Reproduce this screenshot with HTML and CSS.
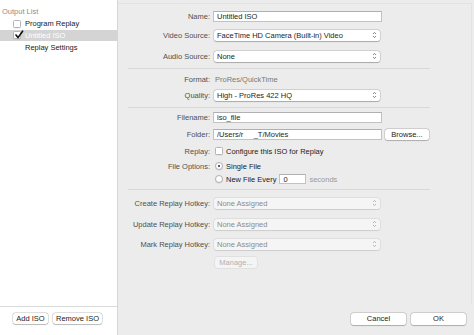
FILE: index.html
```html
<!DOCTYPE html>
<html lang="en">
<head>
    <meta charset="UTF-8">
    <title>ISO Settings</title>
    <link rel="stylesheet" href="styles.css">
</head>
<body>
    <div class="window">
        <aside class="sidebar">
            <div class="outline">
                <div class="outline-title">Output List</div>
                <div class="outline-item"><span class="check"></span>Program Replay</div>
                <div class="outline-item selected">
                    <span class="check">
                        <svg class="tick" viewBox="0 0 10 10"><path d="M2 5 L4 7.6 L8.6 1.2"/></svg>
                    </span>Untitled ISO
                </div>
                <div class="outline-item">Replay Settings</div>
            </div>
            <div class="sidebar-footer">
                <button class="btn">Add ISO</button>
                <button class="btn">Remove ISO</button>
            </div>
        </aside>

        <main class="content">
            <div class="panel">
                <div class="form">
                    <div class="row">
                        <span class="label">Name:</span>
                        <input class="text-field" type="text" value="Untitled ISO">
                    </div>
                    <div class="row mt7">
                        <span class="label">Video Source:</span>
                        <div class="popup">
                            <span>FaceTime HD Camera (Built-in) Video</span>
                            <svg class="arrows" viewBox="0 0 5 8"><path d="M1 3 L2.5 1.4 L4 3 M1 5 L2.5 6.6 L4 5"/></svg>
                        </div>
                    </div>
                    <div class="row mt9">
                        <span class="label">Audio Source:</span>
                        <div class="popup">
                            <span>None</span>
                            <svg class="arrows" viewBox="0 0 5 8"><path d="M1 3 L2.5 1.4 L4 3 M1 5 L2.5 6.6 L4 5"/></svg>
                        </div>
                    </div>

                    <div class="sep mt6"></div>

                    <div class="row mt4">
                        <span class="label">Format:</span>
                        <span class="value">ProRes/QuickTime</span>
                    </div>
                    <div class="row mt4">
                        <span class="label">Quality:</span>
                        <div class="popup">
                            <span>High - ProRes 422 HQ</span>
                            <svg class="arrows" viewBox="0 0 5 8"><path d="M1 3 L2.5 1.4 L4 3 M1 5 L2.5 6.6 L4 5"/></svg>
                        </div>
                    </div>

                    <div class="sep mt6"></div>

                    <div class="row mt3">
                        <span class="label">Filename:</span>
                        <input class="text-field" type="text" value="iso_file">
                    </div>
                    <div class="row mt5">
                        <span class="label">Folder:</span>
                        <input class="text-field" type="text" value="/Users/r     _T/Movies">
                        <button class="btn browse">Browse...</button>
                    </div>
                    <div class="row mt5">
                        <span class="label">Replay:</span>
                        <label class="option"><span class="check"></span>Configure this ISO for Replay</label>
                    </div>
                    <div class="row mt3">
                        <span class="label">File Options:</span>
                        <label class="option"><span class="radio on"></span>Single File</label>
                    </div>
                    <div class="row mt1">
                        <span class="label"></span>
                        <label class="option"><span class="radio"></span>New File Every</label>
                        <input class="text-field small" type="text" value="0">
                        <span class="unit">seconds</span>
                    </div>

                    <div class="sep mt4"></div>

                    <div class="row mt7">
                        <span class="label">Create Replay Hotkey:</span>
                        <div class="popup disabled">
                            <span>None Assigned</span>
                            <svg class="arrows" viewBox="0 0 5 8"><path d="M1 3 L2.5 1.4 L4 3 M1 5 L2.5 6.6 L4 5"/></svg>
                        </div>
                    </div>
                    <div class="row mt9">
                        <span class="label">Update Replay Hotkey:</span>
                        <div class="popup disabled">
                            <span>None Assigned</span>
                            <svg class="arrows" viewBox="0 0 5 8"><path d="M1 3 L2.5 1.4 L4 3 M1 5 L2.5 6.6 L4 5"/></svg>
                        </div>
                    </div>
                    <div class="row mt8">
                        <span class="label">Mark Replay Hotkey:</span>
                        <div class="popup disabled">
                            <span>None Assigned</span>
                            <svg class="arrows" viewBox="0 0 5 8"><path d="M1 3 L2.5 1.4 L4 3 M1 5 L2.5 6.6 L4 5"/></svg>
                        </div>
                    </div>
                    <div class="row mt6">
                        <span class="label"></span>
                        <button class="btn manage" disabled>Manage...</button>
                    </div>
                </div>
            </div>
            <div class="content-footer">
                <button class="btn wide">Cancel</button>
                <button class="btn wide">OK</button>
            </div>
        </main>
    </div>
</body>
</html>
```

FILE: styles.css
```css
* { margin: 0; padding: 0; box-sizing: border-box; }
body {
    font-family: 'Liberation Sans', Arial, sans-serif;
    font-size: 7.5px;
    color: #222;
    background: #ececec;
    width: 474px;
    height: 335px;
    overflow: hidden;
}
.window { display: flex; height: 335px; }

/* sidebar */
.sidebar {
    width: 118px;
    background: #fff;
    border-right: 1px solid #d6d6d6;
    display: flex;
    flex-direction: column;
}
.outline { flex: 1; padding-top: 6px; }
.outline-title { height: 12px; line-height: 12px; padding-left: 2px; color: #8e8e8e; }
.outline-item {
    height: 11px;
    display: flex;
    align-items: center;
    padding-left: 25px;
    color: #222;
    position: relative;
}
.outline-item .check { position: absolute; left: 13px; top: 1.5px; }
.outline-item + .outline-item { margin-top: 0.5px; }
.outline-item:last-child { margin-top: 1.5px; }
.outline-item.selected { background: #d4d4d4; color: #fff; }
.sidebar-footer {
    height: 29px;
    border-top: 1px solid #d9d9d9;
    padding: 6px 0 0 13px;
    display: flex;
    gap: 5px;
}
.sidebar-footer .btn:first-child { width: 35px; }
.sidebar-footer .btn:last-child { width: 49px; }

/* controls */
.btn {
    font: inherit;
    color: #222;
    height: 11px;
    line-height: 11px;
    background: #fff;
    border: none;
    border-radius: 2.5px;
    box-shadow: 0 0 0 0.5px rgba(0, 0, 0, 0.22), 0 0.5px 1px rgba(0, 0, 0, 0.18);
    text-align: center;
}
.btn:disabled { background: #f4f4f4; color: #b0b0b0; box-shadow: 0 0 0 0.5px rgba(0, 0, 0, 0.1); }
.check {
    width: 8px;
    height: 8px;
    background: #fff;
    border: 0.5px solid #b5b5b5;
    border-radius: 1.5px;
    box-shadow: 0 0.5px 0.5px rgba(0, 0, 0, 0.1);
    display: inline-block;
    flex: none;
}
.tick { width: 10px; height: 10px; margin: -2px 0 0 -0.5px; display: block; }
.tick path { fill: none; stroke: #111; stroke-width: 1.6; stroke-linecap: round; stroke-linejoin: round; }
.radio {
    width: 8px;
    height: 8px;
    border-radius: 50%;
    background: #fff;
    border: 0.5px solid #b0b0b0;
    box-shadow: 0 0.5px 0.5px rgba(0, 0, 0, 0.1);
    display: inline-flex;
    align-items: center;
    justify-content: center;
    flex: none;
}
.radio.on::after { content: ''; width: 2.5px; height: 2.5px; border-radius: 50%; background: #222; }

/* content */
.content { flex: 1; display: flex; flex-direction: column; padding-top: 3px; }
.panel {
    flex: 1;
    border-top: 1px solid #e2e2e2;
    border-right: 1px solid #e2e2e2;
    margin-right: 2px;
}
.form { padding-top: 6px; }
.row { display: flex; align-items: center; height: 12px; }
.label { width: 92px; text-align: right; color: #505050; margin-right: 3px; flex: none; }
.value { color: #7a7a7a; margin-left: 2px; }
.text-field {
    font: inherit;
    color: #1e1e1e;
    width: 169px;
    height: 11px;
    padding: 0 3px;
    background: #fff;
    border: 0.5px solid #c2c2c2;
    border-top-color: #b0b0b0;
    outline: none;
}
.text-field.small { width: 27px; height: 10px; margin-left: 3px; }
.unit { color: #9a9a9a; margin-left: 3px; }
.popup {
    width: 166px;
    height: 11px;
    margin-left: 1px;
    padding: 0 3px;
    display: flex;
    align-items: center;
    justify-content: space-between;
    background: #fff;
    border-radius: 2.5px;
    box-shadow: 0 0 0 0.5px rgba(0, 0, 0, 0.2), 0 0.5px 1px rgba(0, 0, 0, 0.2);
    color: #1e1e1e;
}
.popup.disabled { background: #f5f5f5; color: #8c8c8c; box-shadow: 0 0 0 0.5px rgba(0, 0, 0, 0.1), 0 0.5px 1px rgba(0, 0, 0, 0.08); }
.arrows { width: 5px; height: 8px; }
.arrows path { fill: none; stroke: #6a6a6a; stroke-width: 0.8; }
.popup.disabled .arrows path { stroke: #a8a8a8; }
.browse { width: 44px; margin-left: 3px; }
.manage { width: 42px; margin-left: 2px; }
.option { display: flex; align-items: center; gap: 3px; margin-left: 2px; color: #222; }
.sep { height: 1px; background: #d8d8d8; margin-left: 10px; width: 302px; }

.mt1 { margin-top: 1px; }
.mt3 { margin-top: 3px; }
.mt4 { margin-top: 4px; }
.mt5 { margin-top: 5px; }
.mt6 { margin-top: 6px; }
.mt7 { margin-top: 7px; }
.mt8 { margin-top: 8px; }
.mt9 { margin-top: 9px; }

.content-footer {
    height: 31px;
    display: flex;
    justify-content: flex-end;
    gap: 5px;
    padding: 9px 8px 0 0;
}
.btn.wide { width: 55px; height: 12px; line-height: 12px; }
```
